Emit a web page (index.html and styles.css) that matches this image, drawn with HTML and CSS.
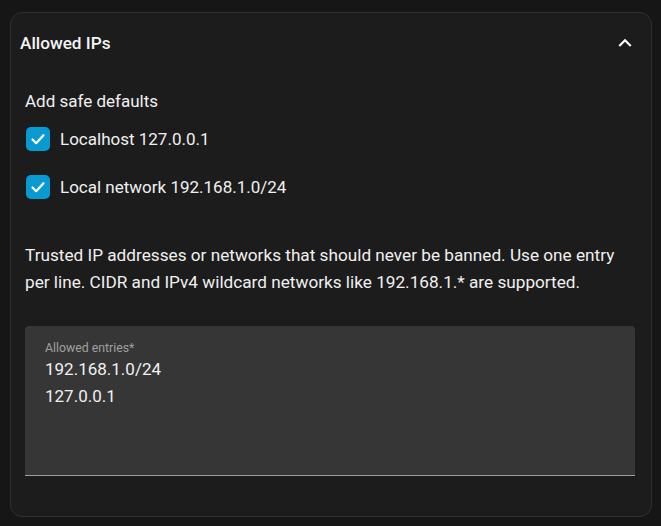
FILE: index.html
```html
<!DOCTYPE html>
<html lang="en">
<head>
    <meta charset="UTF-8">
    <meta name="viewport" content="width=device-width, initial-scale=1.0">
    <title>Allowed IPs</title>
    <link rel="stylesheet" href="styles.css">
</head>
<body>
    <div class="card">
        <div class="card-header">
            <span class="card-title">Allowed IPs</span>
            <svg class="chevron" width="26" height="26" viewBox="0 0 24 24">
                <path d="M7.41,15.41L12,10.83L16.59,15.41L18,14L12,8L6,14L7.41,15.41Z" fill="#fff"/>
            </svg>
        </div>
        <div class="card-body">
            <div class="section-label">Add safe defaults</div>
            <label class="check-row">
                <span class="checkbox">
                    <svg width="24" height="24" viewBox="0 0 24 24"><path d="M6.5 12.5L10.2 16.2L17.5 8.2" fill="none" stroke="#fff" stroke-width="2.2" stroke-linecap="round" stroke-linejoin="round"/></svg>
                </span>
                Localhost 127.0.0.1
            </label>
            <label class="check-row">
                <span class="checkbox">
                    <svg width="24" height="24" viewBox="0 0 24 24"><path d="M6.5 12.5L10.2 16.2L17.5 8.2" fill="none" stroke="#fff" stroke-width="2.2" stroke-linecap="round" stroke-linejoin="round"/></svg>
                </span>
                Local network 192.168.1.0/24
            </label>
            <p class="description">Trusted IP addresses or networks that should never be banned. Use one entry per line. CIDR and IPv4 wildcard networks like 192.168.1.* are supported.</p>
            <div class="textfield">
                <div class="textfield-label">Allowed entries*</div>
                <div class="textfield-value">192.168.1.0/24<br>127.0.0.1</div>
            </div>
        </div>
    </div>
</body>
</html>
```

FILE: styles.css
```css
body {
    background: #161616;
    font-family: Roboto, 'Noto Sans', sans-serif;
    color: #f0f0f0;
    margin: 0;
    padding: 12px 9px 9px 10px;
}
.card {
    background: #1c1c1c;
    border: 1px solid #2f2f2f;
    border-radius: 12px;
    height: 505px;
    box-sizing: border-box;
}
.card-header {
    display: flex;
    justify-content: space-between;
    align-items: center;
    padding: 0 13px 0 9px;
    height: 60px;
}
.card-title {
    font-size: 17.2px;
    font-weight: 500;
    color: #f5f5f5;
}
.chevron {
    display: block;
}
.card-body {
    padding: 16px 16px 0 14px;
}
.section-label {
    font-size: 17px;
    line-height: 24px;
    margin-bottom: 2px;
}
.check-row {
    display: flex;
    align-items: center;
    gap: 10px;
    font-size: 17px;
    height: 48px;
}
.checkbox {
    width: 24px;
    height: 24px;
    border-radius: 5px;
    background: #0a9ad2;
    display: flex;
    align-items: center;
    justify-content: center;
    margin-left: 1px;
}
.checkbox svg {
    display: block;
}
.description {
    font-size: 17.2px;
    line-height: 27px;
    margin: 31px 0 30px;
}
.textfield {
    background: #363636;
    border-radius: 4px 4px 0 0;
    border-bottom: 1px solid #9e9e9e;
    height: 150px;
    padding: 14px 20px 0;
    box-sizing: border-box;
}
.textfield-label {
    font-size: 12.3px;
    color: #a0a0a0;
    line-height: 16px;
}
.textfield-value {
    font-size: 17px;
    line-height: 27px;
    margin-top: 0;
}
```
